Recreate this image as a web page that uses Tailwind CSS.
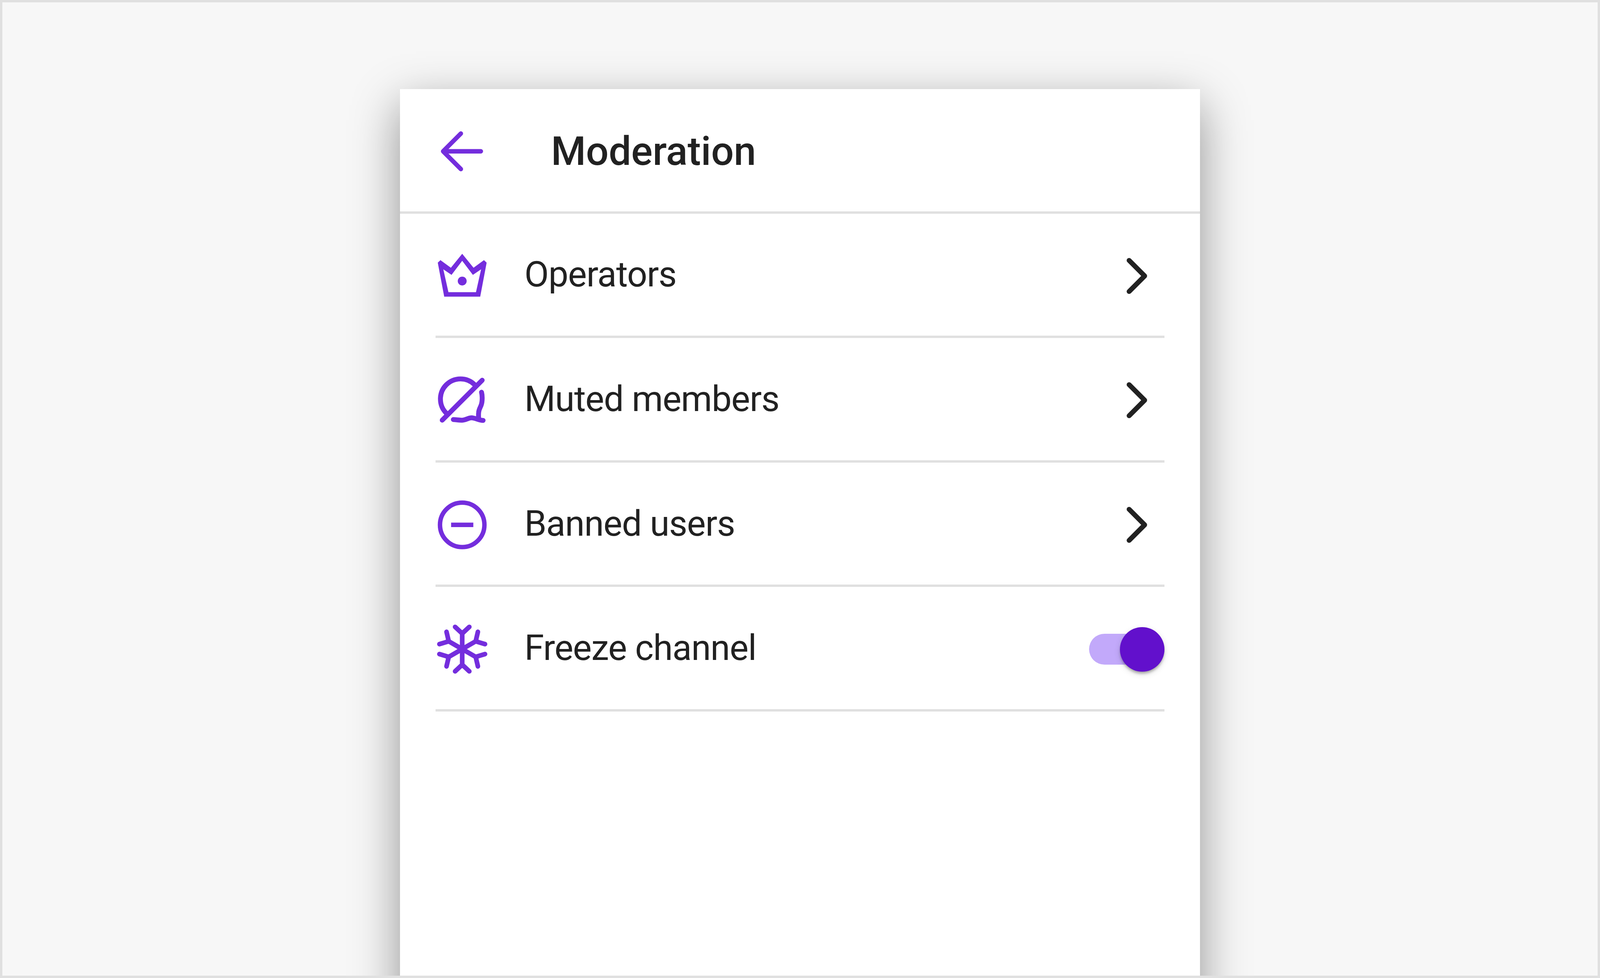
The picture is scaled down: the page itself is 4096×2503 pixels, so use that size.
<!DOCTYPE html>
<html><head><meta charset="utf-8"><script src="https://cdn.jsdelivr.net/npm/@tailwindcss/browser@4"></script></head>
<body class="m-0">
<div class="w-[4096px] h-[2503px] bg-[#e0e0e0] p-[6px] overflow-hidden font-['Roboto',sans-serif] text-[#212121]">
<div class="w-full h-full bg-[#f7f7f7] overflow-hidden flex justify-center pt-[222px]">
<div class="w-[2048px] h-[2400px] shrink-0 bg-white flex flex-col shadow-[0_40px_114px_rgba(0,0,0,0.41)]">
  <div class="h-[318.6px] shrink-0 flex items-center pl-[91px] relative">
    <svg class="w-[136.5px] h-[136.5px] shrink-0" viewBox="0 0 24 24" fill="none" stroke="#742ddd" stroke-width="2" stroke-linecap="round" stroke-linejoin="round"><path d="M11.4 4 3.4 12l8 8M3.4 12h17"/></svg>
    <span class="ml-[159px] text-[102.4px] font-medium leading-none">Moderation</span>
    <div class="absolute left-0 right-0 bottom-0 h-[6px] bg-[#e0e0e0]"></div>
  </div>
  <div class="h-[318.6px] shrink-0 mx-[91px] flex items-center relative">
    <svg class="w-[136.5px] h-[136.5px] shrink-0" viewBox="0 0 24 24"><path fill="#742ddd" fill-rule="evenodd" d="M12 2 6.9 8.3 2.2 4.9 1 6 3.9 21.3H20.100L23 6 21.800 4.900 17.100 8.300ZM12 5.200 7.200 11.500 3.500 9 5.800 19.300H18.200L20.500 9 16.800 11.500Z"/><circle cx="12" cy="14.300" r="2" fill="#742ddd"/></svg>
    <span class="ml-[91px] mb-[6px] text-[91px] tracking-[-1.1px] leading-none grow">Operators</span>
    <svg class="w-[136.5px] h-[136.5px] shrink-0" viewBox="0 0 24 24" fill="none" stroke="#212121" stroke-width="2.2" stroke-linecap="round" stroke-linejoin="round"><path d="m8 5 7 7-7 7"/></svg>
    <div class="absolute left-0 right-0 bottom-0 h-[6px] bg-[#e0e0e0]"></div>
  </div>
  <div class="h-[318.6px] shrink-0 mx-[91px] flex items-center relative">
    <svg class="w-[136.5px] h-[136.5px] shrink-0" viewBox="0 0 24 24" fill="none" stroke="#742ddd" stroke-width="2.2" stroke-linecap="round"><path d="M3 21 21 3M4.900 17.900A9 9 0 0 1 17.600 5M20.700 8.400C21.100 10 21.100 12.500 20.600 14 20.200 15.300 19.500 16 19.400 17.500 19.300 18.500 19.300 19.500 19.500 20.600M8 20.700C9.500 20.800 10.500 21 11.800 21 13.500 21 14.800 19.900 16.200 19.900 17.800 19.900 19.500 21.100 21.400 21.100"/></svg>
    <span class="ml-[91px] mb-[6px] text-[91px] tracking-[-1.1px] leading-none grow">Muted members</span>
    <svg class="w-[136.5px] h-[136.5px] shrink-0" viewBox="0 0 24 24" fill="none" stroke="#212121" stroke-width="2.2" stroke-linecap="round" stroke-linejoin="round"><path d="m8 5 7 7-7 7"/></svg>
    <div class="absolute left-0 right-0 bottom-0 h-[6px] bg-[#e0e0e0]"></div>
  </div>
  <div class="h-[318.6px] shrink-0 mx-[91px] flex items-center relative">
    <svg class="w-[136.5px] h-[136.5px] shrink-0" viewBox="0 0 24 24" fill="none" stroke="#742ddd" stroke-width="2"><circle cx="12" cy="12" r="10"/><path d="M7 12h10"/></svg>
    <span class="ml-[91px] mb-[6px] text-[91px] tracking-[-1.1px] leading-none grow">Banned users</span>
    <svg class="w-[136.5px] h-[136.5px] shrink-0" viewBox="0 0 24 24" fill="none" stroke="#212121" stroke-width="2.2" stroke-linecap="round" stroke-linejoin="round"><path d="m8 5 7 7-7 7"/></svg>
    <div class="absolute left-0 right-0 bottom-0 h-[6px] bg-[#e0e0e0]"></div>
  </div>
  <div class="h-[318.6px] shrink-0 mx-[91px] flex items-center relative">
    <svg class="w-[136.5px] h-[136.5px] shrink-0" viewBox="-12 -12 24 24" fill="none" stroke="#742ddd" stroke-width="2.1" stroke-linecap="round" stroke-linejoin="round">
      <path d="M0-7.500V0M-3.200-10 0-7 3.200-10"/>
      <path d="M0-7.500V0M-3.200-10 0-7 3.200-10" transform="rotate(60)"/>
      <path d="M0-7.500V0M-3.200-10 0-7 3.200-10" transform="rotate(120)"/>
      <path d="M0-7.500V0M-3.200-10 0-7 3.200-10" transform="rotate(180)"/>
      <path d="M0-7.500V0M-3.200-10 0-7 3.200-10" transform="rotate(240)"/>
      <path d="M0-7.500V0M-3.200-10 0-7 3.200-10" transform="rotate(300)"/>
    </svg>
    <span class="ml-[91px] mb-[6px] text-[91px] tracking-[-1.1px] leading-none grow">Freeze channel</span>
    <div class="w-[193.4px] h-[113.8px] shrink-0 flex items-center relative">
      <div class="w-full h-[79.6px] rounded-full bg-[#c2a9fa]"></div>
      <div class="absolute right-0 top-0 w-[113.8px] h-[113.8px] rounded-full bg-[#6210cc] shadow-[0_6px_6px_-3px_rgba(0,0,0,0.2),0_6px_6px_0_rgba(0,0,0,0.14),0_6px_17px_0_rgba(0,0,0,0.12)]"></div>
    </div>
    <div class="absolute left-0 right-0 bottom-0 h-[6px] bg-[#e0e0e0]"></div>
  </div>
</div>
</div>
</div>
</body></html>
